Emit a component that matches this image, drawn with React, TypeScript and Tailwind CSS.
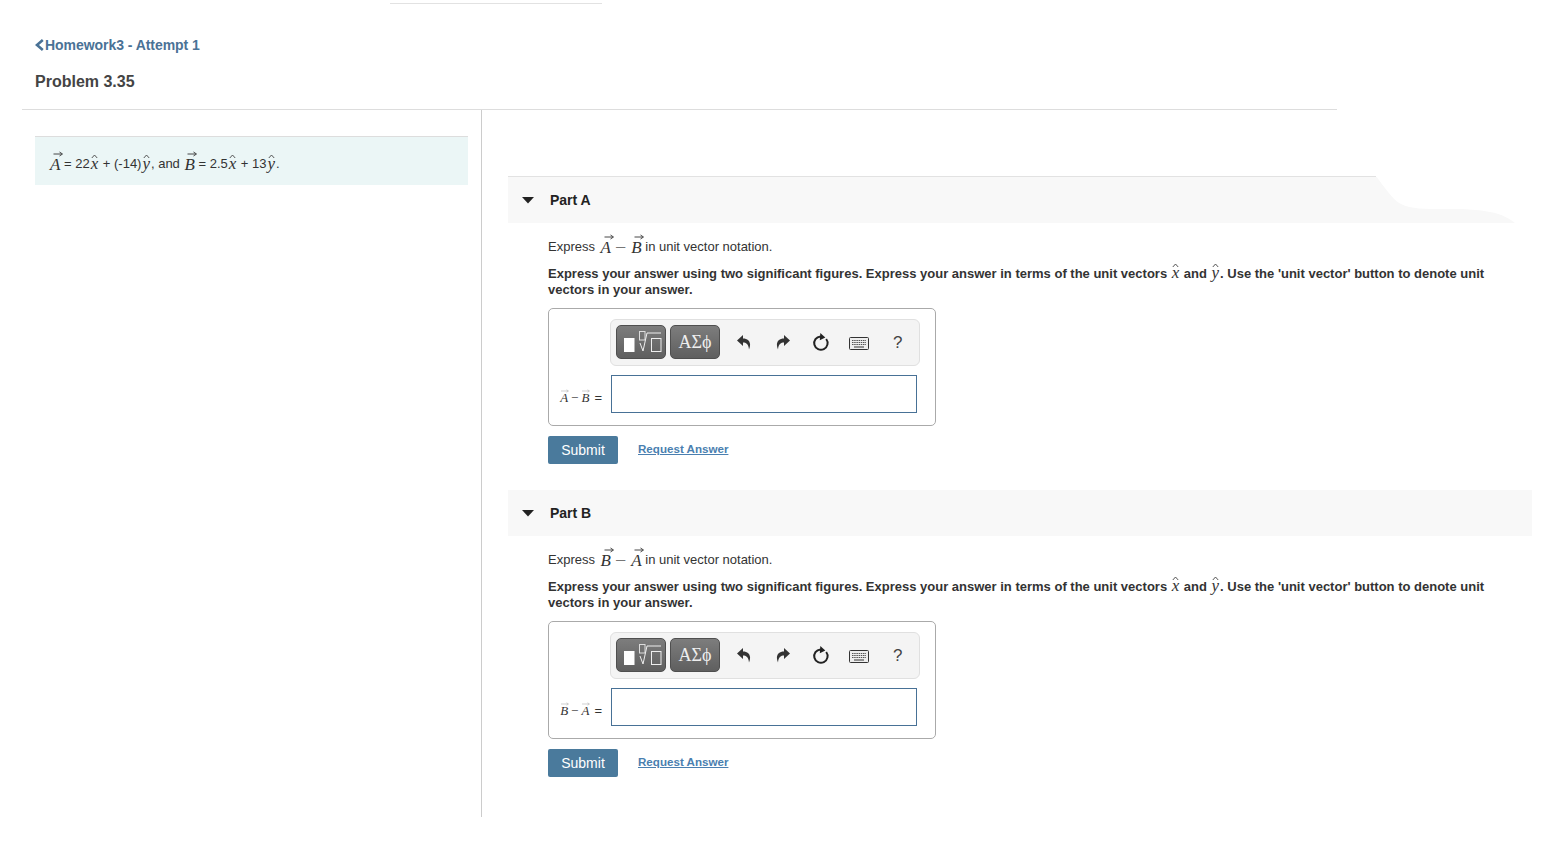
const serif = "font-['Liberation_Serif',serif]";

function Arrow() {
  return (
    <svg className="absolute left-[4px] top-[-6px]" width="10" height="6" viewBox="0 0 10 6">
      <path d="M0.5 3H8.5M6.5 1L9.5 3L6.5 5" fill="none" stroke="#333" strokeWidth="0.9" />
    </svg>
  );
}

function Vec({ letter }: { letter: string }) {
  return (
    <span className={`relative inline-block translate-y-px pl-px ${serif} text-[17px] font-normal italic leading-4 text-[#333]`}>
      <Arrow />
      {letter}
    </span>
  );
}

// unit vector letter with a hat on top
function Hat({ letter }: { letter: string }) {
  return (
    <span className={`relative inline-block w-[9.5px] text-center ${serif} text-[17px] font-normal italic leading-4 text-[#333]`}>
      <svg className="absolute left-[1.5px] top-[-2px]" width="7" height="5" viewBox="0 0 7 5">
        <path d="M0.8 4L3.5 1L6.2 4" fill="none" stroke="#444" strokeWidth="0.9" />
      </svg>
      {letter}
    </span>
  );
}

function SmallVec({ letter }: { letter: string }) {
  return (
    <span className="relative italic">
      <svg className="absolute left-[1px] top-[-1px]" width="8" height="4" viewBox="0 0 8 4">
        <path d="M0 2H7M5.5 .8L7.5 2L5.5 3.2" fill="none" stroke="#bbb" strokeWidth="0.7" />
      </svg>
      {letter}
    </span>
  );
}

function SmallExpr({ a, b }: { a: string; b: string }) {
  return (
    <span className={`flex w-[53px] items-center justify-end gap-[3px] pt-[7px] ${serif} text-[13px] leading-4 text-[#333]`}>
      <SmallVec letter={a} />
      <span>−</span>
      <SmallVec letter={b} />
      <span className="ml-[2px] font-['Liberation_Sans',sans-serif] text-[13px]">=</span>
    </span>
  );
}

function Toolbar() {
  const btn =
    'flex h-[34px] w-[50px] items-center justify-center rounded-[5px] border border-[#4f4f4f] bg-gradient-to-b from-[#7d7d7d] to-[#5f5f5f]';
  return (
    <div className="ml-[61px] flex h-[47px] w-[310px] items-center rounded-md border border-[#e0e0e0] bg-[#f4f4f4] pb-[1px] pl-[5px]">
      <div className={btn}>
        <svg width="48" height="32" viewBox="0 0 48 32">
          <rect x="7" y="12" width="10.5" height="14" fill="#fff" />
          <rect x="22.5" y="5.5" width="5.5" height="8.5" fill="none" stroke="#ddd" strokeWidth="1" />
          <path d="M23 17L26 25L30 7H44" fill="none" stroke="#eee" strokeWidth="1" />
          <rect x="34.5" y="12.5" width="9.5" height="13" fill="none" stroke="#eee" strokeWidth="1" />
        </svg>
      </div>
      <div className={`${btn} ml-1 ${serif} text-[18px] text-[#eee]`}>ΑΣϕ</div>
      <svg className="ml-[17px]" width="14" height="15" viewBox="0 0 14 15">
        <path d="M6 0L0 5.5L6 11V7.5C9 7.5 11.5 9 12 14.5C14.8 8 12 3.5 6 3.5Z" fill="#333" />
      </svg>
      <svg className="ml-[25px]" width="14" height="15" viewBox="0 0 14 15">
        <path d="M8 0L14 5.5L8 11V7.5C5 7.5 2.5 9 2 14.5C-.8 8 2 3.5 8 3.5Z" fill="#333" />
      </svg>
      <svg className="ml-[21px]" width="20" height="20" viewBox="0 0 20 20">
        <path d="M15.2 7A6.7 6.7 0 1 1 9.5 4.4" fill="none" stroke="#222" strokeWidth="2" />
        <path d="M9.3 1L14.3 5.5L8.8 8.3Z" fill="#222" />
      </svg>
      <svg className="ml-[18px] mt-[3px]" width="20" height="13" viewBox="0 0 20 13">
        <rect x=".5" y=".5" width="19" height="12" rx="1" fill="#eee" stroke="#333" />
        <path d="M3 3.5H17M3 5.5H17M3 7.5H17" stroke="#555" strokeWidth="1" strokeDasharray="1.5 .7" />
        <path d="M5 10H15" stroke="#333" strokeWidth="1" />
      </svg>
      <span className="ml-[24px] text-[17px] leading-none text-[#444]">?</span>
    </div>
  );
}

function Part({
  title,
  a,
  b,
  first,
}: {
  title: string;
  a: string;
  b: string;
  first?: boolean;
}) {
  return (
    <section>
      <div className="relative flex h-[46px] items-center bg-[#f8f8f8] pl-[14px]">
        {first && <div className="absolute left-0 top-[-1px] h-px w-[868px] bg-[#e2e2e2]" />}
        {first && (
          <svg className="absolute right-0 top-[-1px]" width="157" height="47" viewBox="0 0 157 47">
            <path d="M1 0C10 12 18 24 26 28C36 33 50 33 70 33C100 33 125 34 140 47H157V0Z" fill="#fff" />
          </svg>
        )}
        <svg width="12" height="7" viewBox="0 0 12 7">
          <path d="M0 0H12L6 6.5Z" fill="#222" />
        </svg>
        <h2 className="ml-[16px] text-[14px] font-bold text-[#222]">{title}</h2>
      </div>

      <div className="pl-10">
        <p className="mt-[15px] flex h-[18px] items-center text-[13px] text-[#333]">
          <span className="mr-px">Express&nbsp;</span>
          <Vec letter={a} />
          <span className={`${serif} mx-[4px] text-[20px] leading-4 text-[#777]`}>−</span>
          <Vec letter={b} />
          <span>&nbsp;in unit vector notation.</span>
        </p>
        <p className="mt-[9px] w-[960px] text-[13px] font-bold leading-4 text-[#333]">
          Express your answer using two significant figures. Express your answer in terms of the unit vectors{' '}
          <Hat letter="x" /> and <Hat letter="y" />. Use the 'unit vector' button to denote unit vectors in your
          answer.
        </p>

        <div className="mt-[10px] h-[118px] w-[388px] rounded-[5px] border border-[#aaa] pt-[10px]">
          <Toolbar />
          <div className="mt-[9px] flex items-center">
            <SmallExpr a={a} b={b} />
            <div className="ml-[9px] h-[38px] w-[306px] border border-[#487196]" />
          </div>
        </div>

        <div className="mt-[10px] flex items-center">
          <button className="h-7 w-[70px] rounded-[2px] bg-[#4a7a9c] text-[14px] text-white">Submit</button>
          <a className="mb-[2px] ml-5 text-[11.6px] font-bold text-[#4a7fb0] underline">Request Answer</a>
        </div>
      </div>
    </section>
  );
}

export default function App() {
  return (
    <div className="h-[849px] w-[1568px] overflow-hidden bg-white font-['Liberation_Sans',Arial,sans-serif]">
      <div className="ml-[390px] mt-[3px] h-px w-[212px] bg-[#e2e2e2]" />

      <header className="ml-[22px] h-[106px] w-[1315px] border-b border-[#ddd] pl-[13px] pt-[33px]">
        <a className="flex items-center text-[14px] font-bold leading-4 tracking-[-0.05px] text-[#4a7296]">
          <svg width="10" height="12" viewBox="0 0 10 12">
            <path d="M7.8 1L2 6L7.8 11" fill="none" stroke="#4a7296" strokeWidth="2.6" />
          </svg>
          Homework3 - Attempt 1
        </a>
        <h1 className="mt-[19px] text-[16px] font-bold leading-5 text-[#444]">Problem 3.35</h1>
      </header>

      <div className="flex">
        <aside className="ml-[22px] h-[707px] w-[460px] border-r border-[#ccc] pl-[13px] pr-[13px] pt-[26px]">
          <div className="flex h-[49px] w-[433px] items-center border-t border-[#ddd] bg-[#ebf6f6] pl-[14px] pt-[5px] text-[13px] text-[#333]">
            <Vec letter="A" />
            <span>&nbsp;= 22</span>
            <Hat letter="x" />
            <span>&nbsp;+ (-14)</span>
            <Hat letter="y" />
            <span>, and&nbsp;</span>
            <Vec letter="B" />
            <span>&nbsp;= 2.5</span>
            <Hat letter="x" />
            <span>&nbsp;+ 13</span>
            <Hat letter="y" />
            <span>.</span>
          </div>
        </aside>

        <main className="ml-[26px] w-[1024px] pt-[67px]">
          <Part title="Part A" a="A" b="B" first />
          <div className="h-[26px]" />
          <Part title="Part B" a="B" b="A" />
        </main>
      </div>
    </div>
  );
}
